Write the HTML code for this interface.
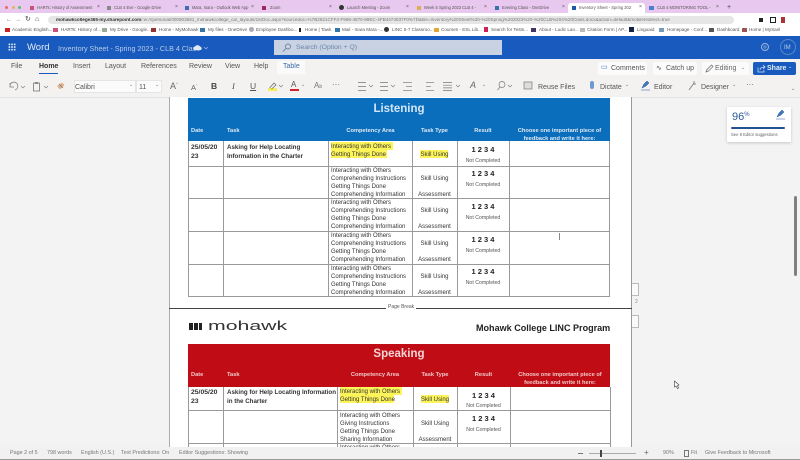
<!DOCTYPE html>
<html><head><meta charset="utf-8"><style>
html,body{margin:0;padding:0;width:800px;height:460px;overflow:hidden;background:#f3f3f3;font-family:"Liberation Sans",sans-serif}
body{filter:blur(.3px)}
div,span{box-sizing:border-box}
.a{position:absolute}
.t{position:absolute;white-space:nowrap;line-height:1}
.tab{font-size:4.100px;color:#555;top:6px}
.x{font-size:5px;color:#555;top:5px}
.bm{font-size:4.600px;color:#555;top:27.500px}
.m{font-size:7px;color:#555;top:63px}
.r{font-size:7px;color:#444}
.c{font-size:6px;color:#333;line-height:8.100px;position:absolute;white-space:nowrap;margin-top:1px}
.h{font-size:5.700px;color:#dfe9f2;font-weight:bold;position:absolute;white-space:nowrap;text-align:center;line-height:8px;margin-top:.5px}
.v{position:absolute;width:1px;background:#999}
.l{position:absolute;height:1px;background:#999}
.n{font-size:7.500px;font-weight:bold;color:#222;position:absolute;white-space:nowrap;text-align:center;margin-top:1px}
.nc{font-size:5.200px;color:#555;position:absolute;white-space:nowrap;text-align:center;margin-top:1px}
.y{background:#fdf45a}
.s{font-size:5.400px;color:#777;top:451px}
.b{font-size:6.200px;font-weight:bold;color:#333;line-height:8.800px;position:absolute;white-space:nowrap;margin-top:1px}
.d{font-size:6.800px}
</style></head><body>
<!-- tab bar -->
<div class="a" style="left:0;top:0;width:800px;height:13px;background:#e8c8ee"></div>
<div class="a" style="left:5px;top:6px;width:3px;height:3px;border-radius:2px;background:#e66"></div>
<div class="a" style="left:12px;top:6px;width:3px;height:3px;border-radius:2px;background:#dcb95a"></div>
<div class="a" style="left:18px;top:6px;width:3px;height:3px;border-radius:2px;background:#6b6"></div>
<div class="a" style="left:30px;top:6px;width:4px;height:4px;background:#c9527a"></div><span class="t tab" style="left:37px">HARTs: History of Assessment</span><span class="t x" style="left:97px">×</span>
<div class="a" style="left:107px;top:6px;width:4px;height:4px;background:#8a8a8a"></div><span class="t tab" style="left:114px">CLB 4 Eve - Google Drive</span><span class="t x" style="left:175px">×</span>
<div class="a" style="left:185px;top:6px;width:4px;height:4px;background:#3a70b0"></div><span class="t tab" style="left:192px">Mara, Inara - Outlook Web App</span><span class="t x" style="left:251px">×</span>
<div class="a" style="left:262px;top:6px;width:4px;height:4px;background:#a02860"></div><span class="t tab" style="left:270px">Zoom</span><span class="t x" style="left:329px">×</span>
<div class="a" style="left:339px;top:5px;width:5px;height:5px;border-radius:3px;background:#333"></div><span class="t tab" style="left:347px">Launch Meeting - Zoom</span><span class="t x" style="left:406px">×</span>
<div class="a" style="left:417px;top:6px;width:4px;height:4px;background:#dcb050"></div><span class="t tab" style="left:424px">Week 5 Spring 2023 CLB 4 -</span><span class="t x" style="left:484px">×</span>
<div class="a" style="left:495px;top:6px;width:4px;height:4px;background:#3a70b0"></div><span class="t tab" style="left:502px">Evening Class - OneDrive</span><span class="t x" style="left:562px">×</span>
<div class="a" style="left:568px;top:3px;width:77px;height:10px;background:#fff;border-radius:3px 3px 0 0"></div>
<div class="a" style="left:572px;top:6px;width:4px;height:4px;background:#1e5aa8"></div><span class="t tab" style="left:579px">Inventory Sheet - Spring 202</span><span class="t x" style="left:639px">×</span>
<div class="a" style="left:649px;top:6px;width:5px;height:4px;background:#4a80d0"></div><span class="t tab" style="left:657px">CLB 4 MONITORING TOOL -</span><span class="t x" style="left:716px">×</span>
<span class="t" style="left:727px;top:4px;font-size:7px;color:#445">+</span>
<!-- address -->
<div class="a" style="left:0;top:13px;width:800px;height:23px;background:#fff"></div>
<div class="a" style="left:48px;top:16px;width:686px;height:8px;background:#e6e6e6;border-radius:4px"></div>
<span class="t" style="left:6px;top:17px;font-size:6px;color:#666">←</span>
<span class="t" style="left:15px;top:17px;font-size:6px;color:#888">→</span>
<span class="t" style="left:25px;top:16px;font-size:7px;color:#444">↻</span>
<span class="t" style="left:35px;top:16px;font-size:7px;color:#444">⌂</span>
<span class="t" style="left:56px;top:17.500px;font-size:4.600px;color:#777;width:620px;overflow:hidden"><b style="color:#333">mohawkcollege365-my.sharepoint.com</b>/:w:/r/personal/000903681_mohawkcollege_ca/_layouts/15/Doc.aspx?sourcedoc=%7B2821CFF4-F968-4870-89EC-4FB4474037F0%7D&amp;file=Inventory%20Sheet%20-%20Spring%202023%20-%20CLB%204%20Class.docx&amp;action=default&amp;mobileredirect=true</span>
<div class="a" style="left:759px;top:18px;width:4px;height:4px;background:#222"></div>
<div class="a" style="left:770px;top:17px;width:6px;height:6px;border:1px solid #222"></div>
<div class="a" style="left:781px;top:17px;width:4px;height:6px;background:#a33"></div>
<!-- bookmarks -->
<div class="a" style="left:5px;top:28px;width:5px;height:4px;background:#c22"></div><span class="t bm" style="left:12px">Academic English...</span>
<div class="a" style="left:53px;top:28px;width:5px;height:4px;background:#c9527a"></div><span class="t bm" style="left:61px">HARTs: History of...</span>
<div class="a" style="left:102px;top:28px;width:5px;height:4px;background:#9a9"></div><span class="t bm" style="left:110px">My Drive - Google...</span>
<div class="a" style="left:151px;top:28px;width:5px;height:4px;background:#933"></div><span class="t bm" style="left:159px">Home - MyMohawk</span>
<div class="a" style="left:200px;top:28px;width:5px;height:4px;background:#37a"></div><span class="t bm" style="left:208px">My files - OneDrive</span>
<div class="a" style="left:249px;top:27px;width:5px;height:5px;border-radius:3px;background:#aab"></div><span class="t bm" style="left:256px">Employee Dashbo...</span>
<div class="a" style="left:299px;top:28px;width:2px;height:4px;background:#222"></div><span class="t bm" style="left:305px">Home | Tawk</span>
<div class="a" style="left:335px;top:28px;width:5px;height:4px;background:#37a"></div><span class="t bm" style="left:342px">Mail - Inara Mara -...</span>
<div class="a" style="left:384px;top:27px;width:5px;height:5px;border-radius:3px;background:#333"></div><span class="t bm" style="left:392px">LINC 5-7 Classroo...</span>
<div class="a" style="left:434px;top:28px;width:5px;height:4px;background:#da3"></div><span class="t bm" style="left:441px">Courses - ESL Lib...</span>
<div class="a" style="left:484px;top:27px;width:4px;height:5px;background:#c25"></div><span class="t bm" style="left:491px">Search for Tests...</span>
<div class="a" style="left:531px;top:28px;width:5px;height:4px;background:#436"></div><span class="t bm" style="left:539px">About - Ludic Lan...</span>
<div class="a" style="left:580px;top:28px;width:5px;height:4px;background:#bbb"></div><span class="t bm" style="left:587px">Citation Form | AP...</span>
<div class="a" style="left:629px;top:27px;width:5px;height:5px;background:#124"></div><span class="t bm" style="left:637px">Linguaid</span>
<div class="a" style="left:659px;top:28px;width:5px;height:4px;background:#79b"></div><span class="t bm" style="left:667px">Homepage - Conf...</span>
<div class="a" style="left:709px;top:28px;width:5px;height:4px;background:#555"></div><span class="t bm" style="left:717px">Dashboard</span>
<div class="a" style="left:742px;top:28px;width:5px;height:4px;background:#955"></div><span class="t bm" style="left:749px">Home | MySanl</span>
<!-- word header -->
<div class="a" style="left:0;top:36px;width:800px;height:23px;background:#185abd"></div>
<div class="a" style="left:8px;top:43px;width:8px;height:8px;background:radial-gradient(circle,#dfe8f5 0.8px,transparent 1px) 0 0/2.7px 2.7px"></div>
<span class="t" style="left:27px;top:43px;font-size:9.500px;color:#e6edf7">Word</span>
<span class="t" style="left:58px;top:44.500px;font-size:7.200px;color:#b9cce9">Inventory Sheet - Spring 2023 - CLB 4 Class</span>
<svg class="a" style="left:192px;top:44px" width="16" height="9"><path d="M2 6a2 2 0 0 1 1-3.500a3 3 0 0 1 5 0a2 2 0 0 1 1 3.500z" fill="#dfe8f5"/><path d="M12 3l2 2 2-2" stroke="#9fb8de" fill="none" stroke-width=".7"/></svg>
<div class="a" style="left:274px;top:40px;width:228px;height:15px;background:#c8d2e2"></div>
<svg class="a" style="left:282px;top:43px" width="10" height="9"><circle cx="6" cy="3.500" r="2.500" fill="none" stroke="#5a6f8f" stroke-width=".7"/><path d="M4 5.500L1 8.500" stroke="#5a6f8f" stroke-width=".7"/></svg>
<span class="t" style="left:296px;top:44.500px;font-size:6.800px;color:#6a85ab">Search (Option + Q)</span>
<svg class="a" style="left:760px;top:42px" width="10" height="10"><circle cx="5" cy="5" r="3.500" fill="none" stroke="#9db6dc" stroke-width="1"/><circle cx="5" cy="5" r="1.200" fill="none" stroke="#9db6dc" stroke-width=".6"/></svg>
<div class="a" style="left:780px;top:39px;width:16px;height:16px;border-radius:8px;border:1px solid #5d88c9"></div>
<span class="t" style="left:784px;top:45px;font-size:6px;color:#b9cce9">IM</span>
<!-- ribbon -->
<div class="a" style="left:0;top:59px;width:800px;height:38px;background:#f3f2f1"></div>
<span class="t m" style="left:11px">File</span>
<span class="t m" style="left:39px;color:#333;font-weight:bold">Home</span>
<div class="a" style="left:39px;top:73px;width:19px;height:1px;background:#185abd"></div>
<span class="t m" style="left:73px">Insert</span>
<span class="t m" style="left:105px">Layout</span>
<span class="t m" style="left:141px">References</span>
<span class="t m" style="left:189px">Review</span>
<span class="t m" style="left:225px">View</span>
<span class="t m" style="left:254px">Help</span>
<div class="a" style="left:277px;top:61px;width:28px;height:13px;background:#fafafa"></div>
<span class="t m" style="left:283px;color:#3a6ea8">Table</span>
<!-- right action buttons -->
<div class="a" style="left:598px;top:62px;width:49px;height:13px;background:#fbfbfb;border-radius:2px"></div>
<span class="t" style="left:601px;top:64px;font-size:7px;color:#3a78c2">▭</span><span class="t r" style="left:611px;top:65px;color:#555">Comments</span>
<div class="a" style="left:653px;top:62px;width:44px;height:13px;background:#fbfbfb;border-radius:2px"></div>
<span class="t" style="left:656px;top:65px;font-size:7px;color:#555">∿</span><span class="t r" style="left:666px;top:65px;color:#555">Catch up</span>
<div class="a" style="left:702px;top:62px;width:47px;height:13px;background:#fbfbfb;border-radius:2px"></div>
<svg class="a" style="left:705px;top:64px" width="9" height="9"><path d="M1 8L2 5.500L6.500 1L8 2.500L3.500 7z" fill="none" stroke="#666" stroke-width=".7"/></svg>
<span class="t r" style="left:715px;top:65px;color:#666">Editing</span><span class="t" style="left:741px;top:66px;font-size:5px;color:#777">⌄</span>
<div class="a" style="left:753px;top:62px;width:43px;height:13px;background:#185abd;border-radius:2px"></div>
<svg class="a" style="left:757px;top:64px" width="9" height="9"><path d="M1 3.500V8H7V6M3 6C3 3.500 5 3 8 3M6 1L8 3L6 5" fill="none" stroke="#d8e4f5" stroke-width=".7"/></svg>
<span class="t r" style="left:767px;top:65px;color:#e6edf7;font-weight:bold">Share</span><span class="t" style="left:788px;top:65px;font-size:5px;color:#e6edf7">⌄</span>
<!-- toolbar -->
<svg class="a" style="left:8px;top:81px" width="20" height="11"><path d="M2 2V6H6M2 6A4 4 0 1 1 7 9" fill="none" stroke="#777" stroke-width=".7"/><path d="M13 5l2 2 2-2" fill="none" stroke="#777" stroke-width=".6"/></svg>
<svg class="a" style="left:32px;top:81px" width="18" height="11"><rect x="1.500" y="2" width="6" height="8" fill="none" stroke="#666" stroke-width=".7"/><rect x="3" y="1" width="3" height="2" fill="#888"/><path d="M12 5l2 2 2-2" fill="none" stroke="#777" stroke-width=".6"/></svg>
<svg class="a" style="left:56px;top:81px" width="10" height="10"><path d="M1 5L6 1.500L8.500 4L4 8.500z" fill="#e0b08a"/><path d="M3 3L7 7" stroke="#777" stroke-width=".7"/></svg>
<div class="a" style="left:74px;top:80px;width:62px;height:13px;background:#fbfbfb;border:1px solid #e5e5e5"></div>
<span class="t r" style="left:75px;top:83.500px;color:#555">Calibri</span><span class="t" style="left:129px;top:83px;font-size:5px;color:#777">⌄</span>
<div class="a" style="left:136px;top:80px;width:26px;height:13px;background:#fbfbfb;border:1px solid #e5e5e5"></div>
<span class="t r" style="left:139px;top:83.500px;color:#555">11</span><span class="t" style="left:155px;top:83px;font-size:5px;color:#777">⌄</span>
<span class="t" style="left:170px;top:82px;font-size:9px;color:#666">A<span style="font-size:4px;vertical-align:4px">^</span></span>
<span class="t" style="left:191px;top:84px;font-size:7.500px;color:#666">A<span style="font-size:4px;vertical-align:3px">ˇ</span></span>
<span class="t" style="left:211px;top:82px;font-size:8.500px;font-weight:bold;color:#444">B</span>
<span class="t" style="left:232px;top:82px;font-size:8.500px;font-style:italic;font-family:'Liberation Serif',serif;color:#555">I</span>
<span class="t" style="left:250px;top:82px;font-size:8.500px;text-decoration:underline;color:#555">U</span>
<svg class="a" style="left:267px;top:80px" width="18" height="13"><rect x="1" y="8" width="9" height="3" fill="#f2ee60"/><path d="M2.500 8L7 3L9 5L4.500 9" fill="none" stroke="#666" stroke-width=".7"/><path d="M12 5l2 2 2-2" fill="none" stroke="#777" stroke-width=".6"/></svg>
<span class="t" style="left:291px;top:81px;font-size:8px;color:#555">A</span><div class="a" style="left:290px;top:89px;width:9px;height:2px;background:#d3232a"></div>
<span class="t" style="left:301px;top:83px;font-size:5px;color:#777">⌄</span>
<span class="t" style="left:314px;top:82px;font-size:8px;color:#777">A<span style="font-size:5px">b</span></span>
<span class="t" style="left:332px;top:81px;font-size:8px;color:#666">···</span>
<svg class="a" style="left:355px;top:80px" width="40" height="13"><path d="M3 2.500H11M3 6.500H11M3 10.500H11" stroke="#777" stroke-width=".7"/><path d="M14 5l2 2 2-2" fill="none" stroke="#777" stroke-width=".6"/><path d="M25 2.500H33M25 6.500H33M25 10.500H33" stroke="#777" stroke-width=".7"/><path d="M36 5l2 2 2-2" fill="none" stroke="#777" stroke-width=".6"/></svg>
<svg class="a" style="left:402px;top:80px" width="62" height="13"><path d="M1 2.500H10M4 6.500H10M1 10.500H10" stroke="#888" stroke-width=".7"/><path d="M24 2.500H32M24 6.500H29M24 10.500H32" stroke="#888" stroke-width=".7"/><path d="M41 2.500H50M41 5.200H50M41 7.900H50M41 10.500H50" stroke="#777" stroke-width=".7"/><path d="M54 5l2 2 2-2" fill="none" stroke="#777" stroke-width=".6"/></svg>
<span class="t" style="left:470px;top:81px;font-size:9px;font-style:italic;color:#666">A</span><span class="t" style="left:482px;top:83px;font-size:5px;color:#777">⌄</span>
<svg class="a" style="left:496px;top:80px" width="18" height="12"><circle cx="6" cy="4.500" r="3" fill="none" stroke="#777" stroke-width=".7"/><path d="M4 7L1.500 10" stroke="#777" stroke-width=".7"/><path d="M12 5l2 2 2-2" fill="none" stroke="#777" stroke-width=".6"/></svg>
<svg class="a" style="left:523px;top:81px" width="11" height="10"><rect x="1" y="1" width="8" height="7" fill="#ddd" stroke="#777" stroke-width=".7"/></svg>
<span class="t r" style="left:538px;top:83.500px;color:#555">Reuse Files</span>
<div class="a" style="left:590px;top:81px;width:4px;height:8px;border-radius:2px;background:#6f9ad0"></div>
<span class="t r" style="left:600px;top:83.500px;color:#555">Dictate</span><span class="t" style="left:625px;top:83px;font-size:5px;color:#777">⌄</span>
<svg class="a" style="left:640px;top:80px" width="11" height="11"><path d="M2 8L4 4L7 1L9 3L6 6zM1 10H10" fill="#4277bd" stroke="#2b579a" stroke-width=".5"/></svg>
<span class="t r" style="left:654px;top:83.500px;color:#555">Editor</span>
<svg class="a" style="left:687px;top:80px" width="11" height="11"><path d="M2 10L7 3M7 1V4H9" fill="none" stroke="#888" stroke-width="1"/></svg>
<span class="t r" style="left:701px;top:83.500px;color:#555">Designer</span><span class="t" style="left:732px;top:83px;font-size:5px;color:#777">⌄</span>
<span class="t" style="left:746px;top:81px;font-size:8px;color:#666">···</span>
<span class="t" style="left:791px;top:87px;font-size:5px;color:#666">⌄</span>
<!-- document -->
<div class="a" style="left:0;top:97px;width:800px;height:350px;background:#f3f3f3"></div>
<div class="a" style="left:0;top:97px;width:800px;height:1px;background:#e4e4e4"></div>
<div class="a" style="left:169px;top:97px;width:463px;height:350px;background:#fff;border-left:1px solid #aaa;border-right:1px solid #999"></div>
<!-- Listening -->
<div class="a" style="left:188px;top:98px;width:422px;height:43px;background:#0a6ebd"></div>
<span class="t" style="left:188px;width:422px;text-align:center;top:103.500px;font-size:11.500px;font-weight:bold;color:#d3e6f5">Listening</span>
<span class="h" style="left:191px;top:126px">Date</span>
<span class="h" style="left:227px;top:126px">Task</span>
<span class="h" style="left:329px;width:83px;top:126px">Competency Area</span>
<span class="h" style="left:412px;width:45px;top:126px">Task Type</span>
<span class="h" style="left:457px;width:52px;top:126px">Result</span>
<span class="h" style="left:509px;width:101px;top:126px">Choose one important piece of<br>feedback and write it here:</span>
<div class="l" style="left:188px;top:166px;width:422px"></div>
<div class="l" style="left:188px;top:198px;width:422px"></div>
<div class="l" style="left:188px;top:231px;width:422px"></div>
<div class="l" style="left:188px;top:264px;width:422px"></div>
<div class="l" style="left:188px;top:296px;width:422px"></div>
<div class="v" style="left:188px;top:141px;height:155px"></div>
<div class="v" style="left:223px;top:141px;height:155px"></div>
<div class="v" style="left:328px;top:141px;height:155px"></div>
<div class="v" style="left:412px;top:141px;height:155px"></div>
<div class="v" style="left:457px;top:141px;height:155px"></div>
<div class="v" style="left:509px;top:141px;height:155px"></div>
<div class="v" style="left:609px;top:141px;height:155px"></div>
<span class="b d" style="left:191px;top:143px">25/05/20<br>23</span>
<span class="b" style="left:227px;top:143px">Asking for Help Locating<br>Information in the Charter</span>
<div class="a y" style="left:331px;top:142px;width:62px;height:8px"></div><div class="a y" style="left:331px;top:150px;width:56px;height:8px"></div>
<span class="c" style="left:331px;top:142px">Interacting with Others<br>Getting Things Done</span>
<div class="a y" style="left:420px;top:150px;width:28px;height:8px"></div>
<span class="c" style="left:412px;width:45px;text-align:center;top:150px">Skill Using</span>
<span class="n" style="left:457px;width:52px;top:144px">1 2 3 4</span><span class="nc" style="left:457px;width:52px;top:157px">Not Completed</span>
<span class="c" style="left:331px;top:166px">Interacting with Others<br>Comprehending Instructions<br>Getting Things Done<br>Comprehending Information</span>
<span class="c" style="left:412px;width:45px;text-align:center;top:174px">Skill Using<br><br>Assessment</span>
<span class="n" style="left:457px;width:52px;top:168px">1 2 3 4</span><span class="nc" style="left:457px;width:52px;top:181px">Not Completed</span>
<span class="c" style="left:331px;top:198px">Interacting with Others<br>Comprehending Instructions<br>Getting Things Done<br>Comprehending Information</span>
<span class="c" style="left:412px;width:45px;text-align:center;top:206px">Skill Using<br><br>Assessment</span>
<span class="n" style="left:457px;width:52px;top:201px">1 2 3 4</span><span class="nc" style="left:457px;width:52px;top:214px">Not Completed</span>
<span class="c" style="left:331px;top:231px">Interacting with Others<br>Comprehending Instructions<br>Getting Things Done<br>Comprehending Information</span>
<span class="c" style="left:412px;width:45px;text-align:center;top:239px">Skill Using<br><br>Assessment</span>
<span class="n" style="left:457px;width:52px;top:234px">1 2 3 4</span><span class="nc" style="left:457px;width:52px;top:247px">Not Completed</span>
<span class="c" style="left:331px;top:264px">Interacting with Others<br>Comprehending Instructions<br>Getting Things Done<br>Comprehending Information</span>
<span class="c" style="left:412px;width:45px;text-align:center;top:272px">Skill Using<br><br>Assessment</span>
<span class="n" style="left:457px;width:52px;top:266px">1 2 3 4</span><span class="nc" style="left:457px;width:52px;top:279px">Not Completed</span>
<div class="a" style="left:559px;top:233px;width:1px;height:7px;background:#888"></div>
<!-- page break -->
<div class="a" style="left:169px;top:308px;width:463px;height:1px;background:#444"></div>
<span class="t" style="left:386px;top:305px;font-size:5px;color:#555;background:#fff;padding:0 2px">Page Break</span>
<!-- logo -->
<div class="a" style="left:189px;top:323px;width:3.500px;height:7px;background:#222"></div>
<div class="a" style="left:194px;top:323px;width:3.500px;height:7px;background:#222"></div>
<div class="a" style="left:198.500px;top:323px;width:3.500px;height:7px;background:#222"></div>
<span class="t" style="left:208px;top:319.500px;font-size:12.500px;color:#333;transform:scaleX(1.700);transform-origin:left">mohawk</span>
<span class="t" style="left:476px;top:324px;font-size:9.050px;font-weight:bold;color:#222">Mohawk College LINC Program</span>
<!-- Speaking -->
<div class="a" style="left:188px;top:344px;width:422px;height:43px;background:#c00d15"></div>
<span class="t" style="left:188px;width:422px;text-align:center;top:348.500px;font-size:11.500px;font-weight:bold;color:#f4d6d6">Speaking</span>
<span class="h" style="left:191px;top:370px;color:#f0c9c9">Date</span>
<span class="h" style="left:227px;top:370px;color:#f0c9c9">Task</span>
<span class="h" style="left:337px;width:76px;top:370px;color:#f0c9c9">Competency Area</span>
<span class="h" style="left:413px;width:44px;top:370px;color:#f0c9c9">Task Type</span>
<span class="h" style="left:457px;width:53px;top:370px;color:#f0c9c9">Result</span>
<span class="h" style="left:510px;width:100px;top:370px;color:#f0c9c9">Choose one important piece of<br>feedback and write it here:</span>
<div class="l" style="left:188px;top:410px;width:422px"></div>
<div class="l" style="left:188px;top:443px;width:422px"></div>
<div class="v" style="left:188px;top:387px;height:60px"></div>
<div class="v" style="left:223px;top:387px;height:60px"></div>
<div class="v" style="left:337px;top:387px;height:60px"></div>
<div class="v" style="left:413px;top:387px;height:60px"></div>
<div class="v" style="left:457px;top:387px;height:60px"></div>
<div class="v" style="left:510px;top:387px;height:60px"></div>
<div class="v" style="left:610px;top:387px;height:60px"></div>
<span class="b d" style="left:191px;top:388px">25/05/20<br>23</span>
<span class="b" style="left:227px;top:388px">Asking for Help Locating Information<br>in the Charter</span>
<div class="a y" style="left:340px;top:387px;width:62px;height:8px"></div><div class="a y" style="left:340px;top:395px;width:54px;height:8px"></div>
<span class="c" style="left:340px;top:387px">Interacting with Others<br>Getting Things Done</span>
<div class="a y" style="left:421px;top:395px;width:28px;height:8px"></div>
<span class="c" style="left:413px;width:44px;text-align:center;top:395px">Skill Using</span>
<span class="n" style="left:457px;width:53px;top:390px">1 2 3 4</span><span class="nc" style="left:457px;width:53px;top:402px">Not Completed</span>
<span class="c" style="left:340px;top:411px">Interacting with Others<br>Giving Instructions<br>Getting Things Done<br>Sharing Information</span>
<span class="c" style="left:413px;width:44px;text-align:center;top:419px">Skill Using<br><br>Assessment</span>
<span class="n" style="left:457px;width:53px;top:413px">1 2 3 4</span><span class="nc" style="left:457px;width:53px;top:426px">Not Completed</span>
<span class="c" style="left:340px;top:443px">Interacting with Others</span>
<!-- margin marks -->
<div class="a" style="left:632px;top:283px;width:7px;height:13px;background:#fafafa;border:1px solid #bbb;border-left:0"></div>
<div class="a" style="left:632px;top:315px;width:7px;height:13px;background:#fafafa;border:1px solid #bbb;border-left:0"></div>
<span class="t" style="left:635px;top:300px;font-size:5px;color:#888">2</span>
<!-- editor card -->
<div class="a" style="left:727px;top:107px;width:64px;height:35px;background:#fff;box-shadow:0 1px 3px rgba(0,0,0,.18)"></div>
<span class="t" style="left:732px;top:112px;font-size:11px;color:#2b579a">96<span style="font-size:6px;vertical-align:4px">%</span></span>
<svg class="a" style="left:775px;top:109px" width="11" height="11"><path d="M2 8L4 4L7 1L9 3L6 6zM1 10H10" fill="#4277bd" stroke="#2b579a" stroke-width=".5"/></svg>
<div class="a" style="left:731px;top:127px;width:54px;height:2px;background:#25508f;border-radius:1px"></div>
<span class="t" style="left:731px;top:133px;font-size:4.200px;color:#666">See 8 Editor suggestions</span>
<!-- scrollbar + cursor -->
<div class="a" style="left:794px;top:196px;width:3px;height:80px;background:#808080;border-radius:2px"></div>
<svg class="a" style="left:673px;top:380px" width="7" height="10"><path d="M1.500 1L1.500 7L3 6L4.500 8.500L5.500 8L4.500 5.500L6 5z" fill="#fff" stroke="#333" stroke-width=".6"/></svg>
<!-- status bar -->
<div class="a" style="left:0;top:447px;width:800px;height:12px;background:#f1f1f1"></div>
<div class="a" style="left:0;top:459px;width:800px;height:1px;background:#999"></div>
<span class="t s" style="left:10px">Page 2 of 5</span>
<span class="t s" style="left:47px">798 words</span>
<span class="t s" style="left:81px">English (U.S.)</span>
<span class="t s" style="left:121px">Text Predictions: On</span>
<span class="t s" style="left:179px">Editor Suggestions: Showing</span>
<div class="a" style="left:578px;top:453px;width:5px;height:1px;background:#777"></div>
<div class="a" style="left:589px;top:453px;width:47px;height:1px;background:#aaa"></div>
<div class="a" style="left:600px;top:450px;width:2px;height:7px;background:#444"></div>
<span class="t" style="left:644px;top:449px;font-size:8px;color:#666">+</span>
<span class="t s" style="left:663px">90%</span>
<div class="a" style="left:684px;top:450px;width:5px;height:7px;border:1px solid #777"></div>
<span class="t s" style="left:691px">Fit</span>
<span class="t s" style="left:705px">Give Feedback to Microsoft</span>
</body></html>
